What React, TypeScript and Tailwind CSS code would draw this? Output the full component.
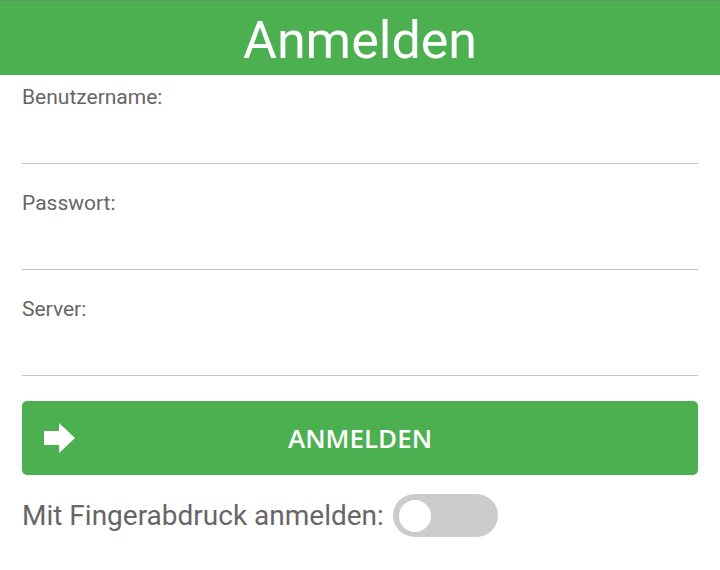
import React from "react";

function Field({ label, first }: { label: string; first?: boolean }) {
  return (
    <div className={first ? "mt-[10px]" : "mt-[27px]"}>
      <div className="text-[21px] leading-[24px] text-[#666666]">{label}</div>
      <div className="h-[55px] border-b border-[#c6c6c6]" />
    </div>
  );
}

export default function App() {
  return (
    <div className="w-[720px] h-[570px] bg-white" style={{ fontFamily: "Roboto, 'Noto Sans', sans-serif" }}>
      <div className="h-[75px] bg-[#4caf50] border-t border-[#5a9c5c] flex items-center justify-center pt-[6px]">
        <h1 className="text-white text-[52px] leading-none font-normal">Anmelden</h1>
      </div>
      <div className="px-[22px]">
        <Field label="Benutzername:" first />
        <Field label="Passwort:" />
        <Field label="Server:" />
        <button className="mt-[25px] w-full h-[74px] rounded-[5px] bg-[#4caf50] relative flex items-center justify-center">
          <svg className="absolute left-[22px] top-[22px]" width="31" height="30" viewBox="0 0 31 30">
            <path d="M0 8 H15 V0 L31 15 L15 30 V22 H0 Z" fill="white" />
          </svg>
          <span className="text-white text-[26px] font-semibold" style={{ fontFamily: "'Open Sans', sans-serif" }}>
            ANMELDEN
          </span>
        </button>
        <div className="mt-[19px] flex items-center gap-[9px]">
          <span className="text-[28px] leading-none text-[#666666]">Mit Fingerabdruck anmelden:</span>
          <div className="w-[105px] h-[43px] rounded-full bg-[#cccccc] flex items-center pl-[6px]">
            <div className="w-[32px] h-[32px] rounded-full bg-white" />
          </div>
        </div>
      </div>
    </div>
  );
}
